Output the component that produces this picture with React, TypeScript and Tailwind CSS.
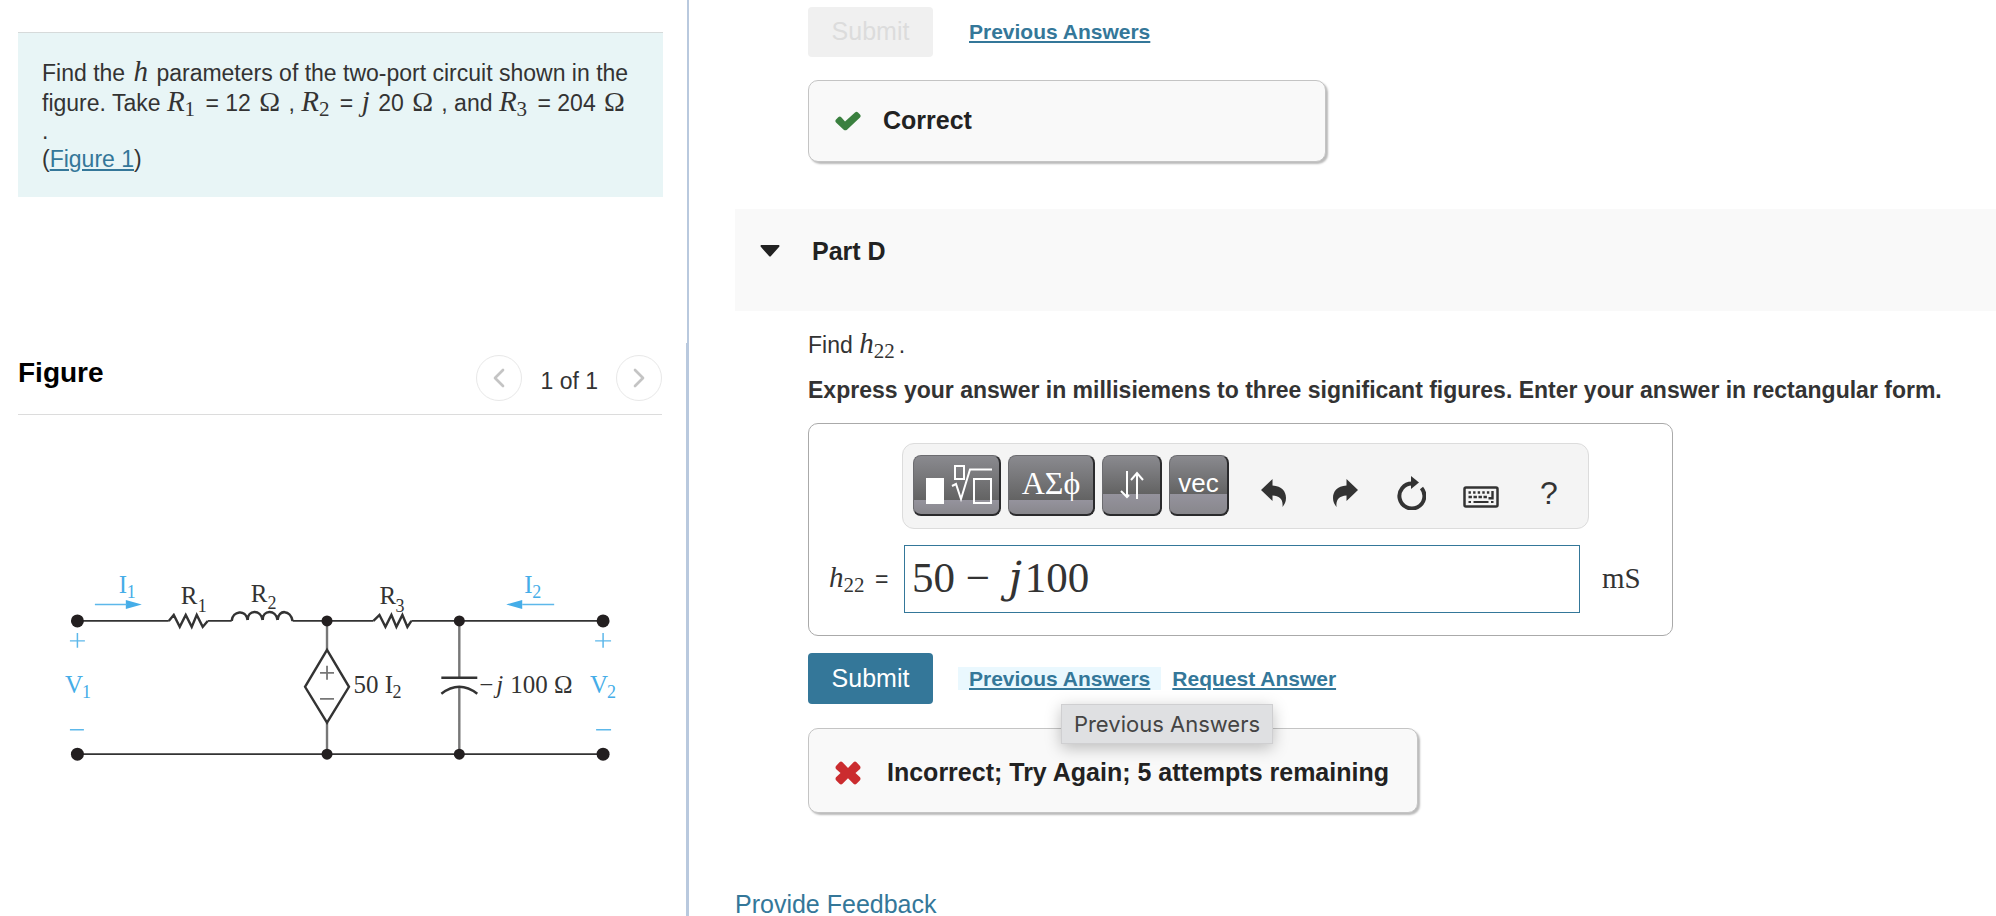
import { useState, type ReactNode } from "react";
import { ChevronLeft, ChevronRight } from "lucide-react";

const LINK = "text-[#347799] underline decoration-2 underline-offset-2";

function Sym({ children, sub }: { children: ReactNode; sub?: string }) {
  return (
    <span className={`font-['Liberation_Serif',serif] text-[29px] leading-none ${sub ? "mr-1" : "mx-0.5"}`}>
      <i>{children}</i>
      {sub && <sub className="bottom-[-5px] text-[21px]">{sub}</sub>}
    </span>
  );
}

function Omega() {
  return <span className="mx-0.5 font-['Liberation_Serif',serif] text-[28px] leading-none">Ω</span>;
}

function CircuitFigure() {
  return (
    <svg
      viewBox="18 560 645 220"
      className="block w-full"
      fill="none"
      stroke="#333"
      strokeWidth="1.8"
      fontFamily="'Liberation Serif', serif"
      fontSize="25"
      role="img"
      aria-label="Two-port circuit"
    >
      {/* wires */}
      <path d="M77 620H169M208 620H232M293 620H374M412 620H604M77 753.5H604" />
      <path d="M327.5 620V649M327.5 722V753M460 620V677M460 687V753" stroke="#777" strokeWidth="2.4" />
      {/* resistors and inductor */}
      <path
        d="M169 620l5-6 6 12 6-12 6 12 5-12 6 12 5-6M374 620l6-6 6 12 6-12 5 12 6-12 5 12 4-6"
        strokeWidth="2.4"
      />
      <path
        d="M232 620c1-10 14-12 16-1M248 619c0-10 13-11 15 0M263 619c0-10 13-11 15 0M278 619c1-11 13-10 15 1"
        strokeWidth="2.6"
      />
      {/* dependent source */}
      <path d="M327.5 649l22 37-22 36-22-36z" strokeWidth="2.4" />
      <path d="M320.5 672h14M327.5 665v14M320.5 698h14" stroke="#777" />
      {/* capacitor */}
      <path d="M442 677h36M442 693q18-14 36 0" strokeWidth="2.4" />
      <g fill="#231f20" stroke="none">
        <circle cx="77.5" cy="620" r="6.5" />
        <circle cx="77.5" cy="753.5" r="6.5" />
        <circle cx="327.5" cy="620" r="5.5" />
        <circle cx="327.5" cy="753.5" r="5.5" />
        <circle cx="460" cy="620" r="5.5" />
        <circle cx="460" cy="753.5" r="5.5" />
        <circle cx="604" cy="620" r="6.5" />
        <circle cx="604" cy="753.5" r="6.5" />
      </g>
      <g fill="#333" stroke="none">
        <text x="181" y="603">R</text>
        <text x="198" y="611" fontSize="18">1</text>
        <text x="251" y="601">R</text>
        <text x="268" y="608" fontSize="18">2</text>
        <text x="380" y="603">R</text>
        <text x="396" y="611" fontSize="18">3</text>
        <text x="354" y="692">50 I</text>
        <text x="393" y="697" fontSize="18">2</text>
        <text x="480" y="692">−</text>
        <text x="497" y="692" fontStyle="italic">j</text>
        <text x="511" y="692">100 Ω</text>
      </g>
      <g fill="#45ade8" stroke="none">
        <text x="119" y="592">I</text>
        <text x="127" y="597" fontSize="18">1</text>
        <text x="525" y="592">I</text>
        <text x="533" y="597" fontSize="18">2</text>
        <text x="65" y="692">V</text>
        <text x="82" y="697" fontSize="18">1</text>
        <text x="591" y="692">V</text>
        <text x="608" y="697" fontSize="18">2</text>
        <path d="M142 603.5l-16-4.5v9zM507 603.5l16-4.5v9z" />
      </g>
      <path
        d="M95 603.5h32M555 603.5h-32M70 640h15M77.5 632v15M70 729h14M596 640h16M604 632v15M597 729h15"
        stroke="#5db8ea"
        strokeWidth="1.5"
      />
    </svg>
  );
}

function CheckMark() {
  return (
    <svg viewBox="0 0 26 20" className="h-5 w-[26px]" fill="#3a803f">
      <path d="M1 8.5l2.5-2.5q1.5-1 3 .5L10 10.5 20 1.5q1.5-1.5 3 0l2 2q1.3 1.5 0 3L12 18.7q-1.7 1.3-3.3 0L1 11.5q-1.3-1.5 0-3z" />
    </svg>
  );
}

function CrossMark() {
  return (
    <svg viewBox="0 0 26 24" className="h-6 w-[26px]" fill="#cb2c2f">
      <path d="M1 5l3.5-3.8q1.5-1.2 3 0L13 7l5.5-5.8q1.5-1.2 3 0L25 5q1 1.5 0 3l-4.5 4 4.5 4.3q1 1.5 0 3l-3.5 3.5q-1.5 1.2-3 0L13 17.3l-5.5 5.5q-1.5 1.2-3 0L1 19.3q-1-1.5 0-3L5.5 12 1 8Q0 6.5 1 5z" />
    </svg>
  );
}

function CurvedArrow({ flip }: { flip?: boolean }) {
  return (
    <svg viewBox="0 0 26 28" className={flip ? "h-7 w-[26px] -scale-x-100" : "h-7 w-[26px]"} fill="#333">
      <path d="M0 11L11.5 0v6.5C21 7 25 12.500 25 19c0 4-1.500 6.500-3.500 9 .8-8-3-11-10-11.500v5.500z" />
    </svg>
  );
}

function ResetIcon() {
  return (
    <svg viewBox="0 0 30 34" className="h-[34px] w-[30px]">
      <path d="M16 7.5A12.5 12.5 0 1 0 25.5 12" fill="none" stroke="#333" strokeWidth="4" />
      <path d="M15 0l8 6.5-8 6.5z" fill="#333" />
    </svg>
  );
}

function KeyboardIcon() {
  return (
    <svg viewBox="0 0 36 22" className="h-[22px] w-9" fill="none" stroke="#333">
      <rect x="1.5" y="1.5" width="33" height="19" rx="1.5" strokeWidth="2.5" />
      <path d="M5.5 6.5h21" strokeWidth="2.4" strokeDasharray="2.4 2.2" />
      <path d="M5.5 11h19" strokeWidth="2.4" strokeDasharray="3.4 1.6" />
      <path d="M29.5 5v7.2h-4" strokeWidth="2.4" />
      <path d="M5.5 16h2.5M10.5 16h15M28 16h2.5" strokeWidth="2.2" />
    </svg>
  );
}

const KEY =
  "flex h-[61px] items-center justify-center rounded-lg border border-r-2 border-b-2 border-[#6c6c70] border-r-[#2a2a2c] border-b-[#2a2a2c] text-white";
const KEY_WIDE = "bg-[linear-gradient(#8a8a8f_0%,#636363_76%,#95939d_76%,#88878c_100%)]";
const KEY_SMALL = "bg-[linear-gradient(#8a8a8f_0%,#636363_65%,#95939d_65%,#88878c_100%)]";

function Toolbar() {
  return (
    <div className="flex h-[86px] w-[687px] items-start rounded-xl border border-[#dcdcdc] bg-[#f4f4f4] pt-[11px] pl-[10px]">
      <div className="flex gap-[7px]">
        <button aria-label="Templates" className={`${KEY} ${KEY_WIDE} w-[88px]`}>
          <svg viewBox="0 0 70 42" className="h-[42px] w-[70px]" fill="none" stroke="#fff" strokeWidth="2">
            <rect x="4" y="14" width="18" height="26" fill="#fff" stroke="none" />
            <rect x="33" y="2" width="9" height="13" />
            <path d="M30 22l4-2 5 15L48 5.5H70" />
            <rect x="52" y="15" width="17" height="24" />
          </svg>
        </button>
        <button className={`${KEY} ${KEY_WIDE} w-[87px] pb-1 font-['Liberation_Serif',serif] text-[32px]`}>
          ΑΣϕ
        </button>
        <button aria-label="Sub and superscript" className={`${KEY} ${KEY_SMALL} w-[60px]`}>
          <svg viewBox="0 0 24 28" className="h-7 w-6" fill="none" stroke="#fff" strokeWidth="2">
            <path d="M7 0v25M1 20l6 6 2-2M17 28V2M11 9l6-7 6 7" />
          </svg>
        </button>
        <button className={`${KEY} ${KEY_SMALL} w-[60px] pb-1 text-[26px]`}>vec</button>
      </div>
      <div className="flex h-[76px] items-center text-[#333]">
        <button aria-label="Undo" className="ml-8">
          <CurvedArrow />
        </button>
        <button aria-label="Redo" className="ml-[45px]">
          <CurvedArrow flip />
        </button>
        <button aria-label="Reset" className="ml-[38px]">
          <ResetIcon />
        </button>
        <button aria-label="Keyboard shortcuts" className="mt-2 ml-[37px]">
          <KeyboardIcon />
        </button>
        <button aria-label="Help" className="ml-[41px] text-[32px] leading-none">
          ?
        </button>
      </div>
    </div>
  );
}

function Feedback({ icon, className, children }: { icon: ReactNode; className: string; children: ReactNode }) {
  return (
    <div
      className={`flex items-center rounded-[10px] border border-[#c4c4c4] bg-[#f9f9f9] pl-[26px] text-[25px] font-bold text-[#222] shadow-[2px_2px_2px_#bbb] ${className}`}
    >
      {icon}
      {children}
    </div>
  );
}

export default function App() {
  const [answer, setAnswer] = useState("50 − 𝑗100");

  return (
    <div className="flex h-screen overflow-hidden bg-white font-['Liberation_Sans',Arial,sans-serif] text-[23px] text-[#333]">
      <aside className="flex w-[689px] shrink-0 flex-col">
        <section className="h-[343px] border-r-2 border-[#b9c9de] pt-8 pr-6 pl-[18px]">
          <div className="h-[165px] border-t border-[#d6dada] bg-[#e8f5f6] pt-6 pl-6 leading-7">
            <p className="whitespace-nowrap">
              Find the <Sym>h</Sym> parameters of the two-port circuit shown in the
              <br />
              figure. Take <Sym sub="1">R</Sym> = 12 <Omega /> , <Sym sub="2">R</Sym> = <Sym>j</Sym> 20 <Omega /> , and{" "}
              <Sym sub="3">R</Sym> = 204 <Omega />
              <br />.
            </p>
            <p>
              (
              <a href="#figure" className={LINK}>
                Figure 1
              </a>
              )
            </p>
          </div>
        </section>
        <section id="figure" className="grow border-r-[3px] border-[#b9c9de] pr-6 pl-[18px]">
          <header className="flex h-[72px] justify-between border-b border-[#dcdcdc] pt-3">
            <h2 className="text-[28px] leading-9 font-bold text-black">Figure</h2>
            <div className="flex gap-[18px]">
              <button
                aria-label="Previous figure"
                className="flex size-[46px] items-center justify-center rounded-full border border-[#e8e8e8] text-[#c4c4c4]"
              >
                <ChevronLeft size={32} />
              </button>
              <span className="pt-2 leading-9">1 of 1</span>
              <button
                aria-label="Next figure"
                className="flex size-[46px] items-center justify-center rounded-full border border-[#e8e8e8] text-[#c4c4c4]"
              >
                <ChevronRight size={32} />
              </button>
            </div>
          </header>
          <div className="pt-[146px]">
            <CircuitFigure />
          </div>
        </section>
      </aside>

      <main className="min-w-0 grow pl-[46px]">
        <div className="pt-[7px] pl-[73px]">
          <div className="flex items-center gap-9">
            <button disabled className="h-[50px] w-[125px] rounded bg-[#f0f0f0] text-[25px] text-[#dcdcdc]">
              Submit
            </button>
            <a href="#previous" className={`text-[21px] font-bold ${LINK}`}>
              Previous Answers
            </a>
          </div>
          <Feedback icon={<CheckMark />} className="mt-[23px] h-[82px] w-[518px] gap-[22px]">
            Correct
          </Feedback>
        </div>

        <button className="mt-[47px] flex h-[102px] w-full items-start gap-8 bg-[#f9f9f9] pt-7 pl-[25px] text-[25px] leading-7 font-bold text-[#222]">
          <svg viewBox="0 0 20 12" className="mt-2 h-3 w-5" fill="#222">
            <path d="M1 0h18q1 1 0 2l-8 9q-1 1-2 0L1 2Q0 1 1 0z" />
          </svg>
          Part D
        </button>

        <div className="pl-[73px]">
          <p className="pt-[18px] leading-8">
            Find <Sym sub="22">h</Sym>.
          </p>
          <p className="mt-[13px] leading-8 font-bold">
            Express your answer in millisiemens to three significant figures. Enter your answer in rectangular form.
          </p>

          <div className="mt-[17px] h-[213px] w-[865px] rounded-[10px] border border-[#aaa] pt-[19px]">
            <div className="pl-[93px]">
              <Toolbar />
            </div>
            <div className="mt-4 flex items-center pl-5">
              <label htmlFor="answer" className="w-[75px] whitespace-nowrap">
                <Sym sub="22">h</Sym> =
              </label>
              <input
                id="answer"
                value={answer}
                onChange={(e) => setAnswer(e.target.value)}
                className="h-[68px] w-[676px] border border-[#347799] px-[7px] font-['Liberation_Serif','DejaVu_Math_TeX_Gyre',serif] text-[43px] outline-none"
              />
              <span className="ml-[22px] font-['Liberation_Serif',serif] text-[29px]">mS</span>
            </div>
          </div>

          <div className="mt-[17px] flex items-center">
            <button className="h-[51px] w-[125px] rounded bg-[#347799] text-[25px] text-white">Submit</button>
            <div className="relative ml-[25px]">
              <a href="#previous" className={`bg-[#eaf8fe] px-[11px] text-[21px] font-bold ${LINK}`}>
                Previous Answers
              </a>
              <div
                role="tooltip"
                className="absolute top-[43px] left-[103px] flex h-10 w-[212px] items-center justify-center border border-[#cfcfd1] bg-[#dfe0e2] font-[Inter,sans-serif] text-[22px] whitespace-nowrap text-[#444] shadow-[0_4px_16px_rgba(0,0,0,0.25)]"
              >
                Previous Answers
              </div>
            </div>
            <a href="#request" className={`ml-[11px] text-[21px] font-bold ${LINK}`}>
              Request Answer
            </a>
          </div>

          <Feedback icon={<CrossMark />} className="mt-6 h-[85px] w-[610px] gap-[26px] pt-1">
            Incorrect; Try Again; 5 attempts remaining
          </Feedback>
        </div>

        <a href="#feedback" className="mt-[77px] block text-[25px] leading-7 text-[#347799]">
          Provide Feedback
        </a>
      </main>
    </div>
  );
}
